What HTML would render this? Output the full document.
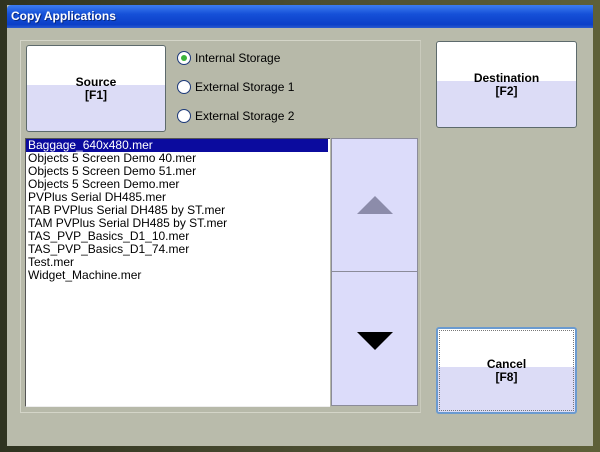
<!DOCTYPE html>
<html><head><style>
*{margin:0;padding:0;box-sizing:border-box}
body{width:600px;height:452px;overflow:hidden;background:linear-gradient(90deg,#2f3320,#4a4c30 50%,#5e6038);position:relative;font-family:"Liberation Sans",sans-serif;font-size:12px;color:#000}
.win{position:absolute;left:7px;top:5px;width:586px;height:441px;background:#b9bbab}
.title{position:absolute;left:7px;top:5px;width:586px;height:23px;background:linear-gradient(180deg,#3d7df0,#1550d8 40%,#0b3fc8 85%,#2a5bd0);color:#fff;font-weight:bold;font-size:12px;line-height:22px;padding-left:4px;text-shadow:1px 1px 0 #0a2a80;border-top-left-radius:4px}
.group{position:absolute;left:20px;top:40px;width:401px;height:373px;border:1px solid #d4d5c8;border-right-color:#c9cabc;background:#b7b9a9}
.btn{position:absolute;border:1px solid #5d6a6c;border-radius:3px;background:linear-gradient(180deg,#fff 0,#fff 46%,#dcdcf6 46%,#dcdcf6 100%);text-align:center;font-weight:bold;font-size:12px;line-height:13px;display:flex;align-items:center;justify-content:center}
.radio{position:absolute;left:177px;font-size:12px;line-height:14px}
.radio i{position:absolute;left:0;top:0;width:14px;height:14px;border-radius:50%;border:1px solid #1d3a7a;background:radial-gradient(circle,#fff 60%,#dcdce8)}
.radio i.on::after{content:"";position:absolute;left:3px;top:3px;width:6px;height:6px;border-radius:50%;background:#3bb43b}
.radio span{position:absolute;left:18px;top:0;white-space:nowrap}
.list{position:absolute;left:25px;top:138px;width:305px;height:269px;background:#fff;border-left:1px solid #555;border-top:1px solid #555;border-bottom:1px solid #eee}
.list div{height:13px;line-height:13px;padding-left:2px;font-size:12px;white-space:nowrap}
.list .sel{background:#0b0b9e;color:#fff;margin-right:2px}
.sb{position:absolute;left:331px;width:87px;background:#dcdcfa;border:1px solid #8b8b99}
</style></head><body>
<div class="win"></div>
<div class="title">Copy Applications</div>
<div class="group"></div>
<div class="btn" style="left:26px;top:45px;width:140px;height:87px">Source<br>[F1]</div>
<div class="radio" style="top:51px"><i class="on"></i><span>Internal Storage</span></div>
<div class="radio" style="top:80px"><i></i><span>External Storage 1</span></div>
<div class="radio" style="top:109px"><i></i><span>External Storage 2</span></div>
<div class="list">
<div class="sel">Baggage_640x480.mer</div>
<div>Objects 5 Screen Demo 40.mer</div>
<div>Objects 5 Screen Demo 51.mer</div>
<div>Objects 5 Screen Demo.mer</div>
<div>PVPlus Serial DH485.mer</div>
<div>TAB PVPlus Serial DH485 by ST.mer</div>
<div>TAM PVPlus Serial DH485 by ST.mer</div>
<div>TAS_PVP_Basics_D1_10.mer</div>
<div>TAS_PVP_Basics_D1_74.mer</div>
<div>Test.mer</div>
<div>Widget_Machine.mer</div>
</div>
<div class="sb" style="top:138px;height:134px"><svg width="87" height="134" style="position:absolute;left:0;top:0"><polygon points="25,75 61,75 43,57" fill="#8c8caa"/></svg></div>
<div class="sb" style="top:271px;height:135px"><svg width="87" height="135" style="position:absolute;left:0;top:0"><polygon points="25,60 61,60 43,78" fill="#000"/></svg></div>
<div class="btn" style="left:436px;top:41px;width:141px;height:87px">Destination<br>[F2]</div>
<div class="btn" style="left:436px;top:327px;width:141px;height:87px;border:2px solid #6a9ad0;outline:1px dotted #777;outline-offset:-4px">Cancel<br>[F8]</div>
</body></html>
